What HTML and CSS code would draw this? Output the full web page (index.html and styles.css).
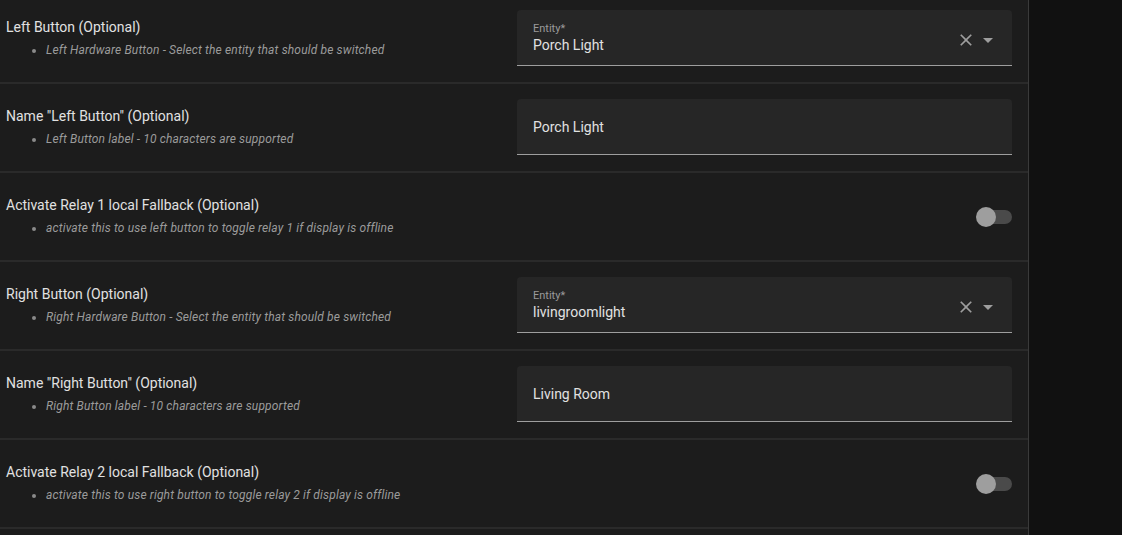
FILE: index.html
```html
<!DOCTYPE html>
<html>
<head>
<meta charset="utf-8">
<link rel="stylesheet" href="styles.css">
</head>
<body>
<div class="layout">
  <div class="panel">
    <div class="rows">
      <div class="row">
        <div class="info">
          <div class="title">Left Button (Optional)</div>
          <ul class="desc"><li>Left Hardware Button - Select the entity that should be switched</li></ul>
        </div>
        <div class="field">
          <div class="field-text">
            <div class="label">Entity*</div>
            <div class="value">Porch Light</div>
          </div>
          <div class="icons">
            <svg class="clear" width="24" height="24" viewBox="0 0 24 24"><path fill="#9e9e9e" d="M19,6.41L17.59,5L12,10.59L6.41,5L5,6.41L10.59,12L5,17.59L6.41,19L12,13.41L17.59,19L19,17.59L13.41,12L19,6.41Z"/></svg>
            <svg class="caret" width="24" height="24" viewBox="0 0 24 24"><path fill="#9e9e9e" d="M7,10L12,15L17,10H7Z"/></svg>
          </div>
        </div>
      </div>
      <div class="row">
        <div class="info">
          <div class="title">Name "Left Button" (Optional)</div>
          <ul class="desc"><li>Left Button label - 10 characters are supported</li></ul>
        </div>
        <div class="field plain">
          <div class="value">Porch Light</div>
        </div>
      </div>
      <div class="row">
        <div class="info">
          <div class="title">Activate Relay 1 local Fallback (Optional)</div>
          <ul class="desc"><li>activate this to use left button to toggle relay 1 if display is offline</li></ul>
        </div>
        <div class="switch"><div class="track"></div><div class="thumb"></div></div>
      </div>
      <div class="row">
        <div class="info">
          <div class="title">Right Button (Optional)</div>
          <ul class="desc"><li>Right Hardware Button - Select the entity that should be switched</li></ul>
        </div>
        <div class="field">
          <div class="field-text">
            <div class="label">Entity*</div>
            <div class="value">livingroomlight</div>
          </div>
          <div class="icons">
            <svg class="clear" width="24" height="24" viewBox="0 0 24 24"><path fill="#9e9e9e" d="M19,6.41L17.59,5L12,10.59L6.41,5L5,6.41L10.59,12L5,17.59L6.41,19L12,13.41L17.59,19L19,17.59L13.41,12L19,6.41Z"/></svg>
            <svg class="caret" width="24" height="24" viewBox="0 0 24 24"><path fill="#9e9e9e" d="M7,10L12,15L17,10H7Z"/></svg>
          </div>
        </div>
      </div>
      <div class="row">
        <div class="info">
          <div class="title">Name "Right Button" (Optional)</div>
          <ul class="desc"><li>Right Button label - 10 characters are supported</li></ul>
        </div>
        <div class="field plain">
          <div class="value">Living Room</div>
        </div>
      </div>
      <div class="row">
        <div class="info">
          <div class="title">Activate Relay 2 local Fallback (Optional)</div>
          <ul class="desc"><li>activate this to use right button to toggle relay 2 if display is offline</li></ul>
        </div>
        <div class="switch"><div class="track"></div><div class="thumb"></div></div>
      </div>
    </div>
  </div>
  <div class="side"></div>
</div>
</body>
</html>
```

FILE: styles.css
```css
html, body {
  margin: 0;
  padding: 0;
  height: 100%;
  overflow: hidden;
  background: #111111;
  font-family: Roboto, "Liberation Sans", sans-serif;
}
.layout {
  display: flex;
  height: 535px;
}
.panel {
  width: 1028px;
  background: #1c1c1c;
  border-right: 1px solid #3a3a3a;
  overflow: hidden;
}
.side {
  flex: 1;
  background: #111111;
}
.rows {
  margin-top: -5px;
}
.row {
  display: flex;
  align-items: center;
  justify-content: space-between;
  height: 87px;
  padding: 0 16px 0 6px;
  border-bottom: 2px solid #2a2a2a;
}
.info {
  align-self: flex-start;
  padding-top: 23px;
}
.title {
  font-size: 14px;
  line-height: 18px;
  color: #e1e1e1;
}
.desc {
  margin: 6px 0 0 0;
  padding-left: 40px;
  font-size: 12px;
  line-height: 16px;
  font-style: italic;
  letter-spacing: 0.15px;
  color: #9b9b9b;
}
.desc li::marker {
  font-style: normal;
  color: #8a8a8a;
}
.field {
  width: 495px;
  height: 55px;
  box-sizing: content-box;
  background: #262626;
  border-bottom: 1px solid #9e9e9e;
  border-radius: 4px 4px 0 0;
  display: flex;
  align-items: center;
  justify-content: space-between;
  padding: 0;
  margin-top: -1px;
}
.field-text {
  padding-left: 16px;
  padding-top: 2px;
}
.label {
  font-size: 11px;
  line-height: 12px;
  color: #9a9a9a;
}
.value {
  font-size: 14px;
  line-height: 20px;
  color: #e1e1e1;
}
.field.plain .value {
  padding-left: 16px;
  padding-top: 1px;
}
.icons {
  display: flex;
  align-items: center;
  padding-right: 12px;
  padding-top: 4px;
}
.clear {
  width: 20px;
  height: 20px;
  margin-right: 0;
}
.caret {
  width: 24px;
  height: 24px;
}
.switch {
  position: relative;
  width: 36px;
  height: 20px;
}
.track {
  position: absolute;
  left: 2px;
  right: 0;
  top: 3px;
  height: 14px;
  border-radius: 7px;
  background: #4a4a4a;
}
.thumb {
  position: absolute;
  left: 0;
  top: 0;
  width: 20px;
  height: 20px;
  border-radius: 50%;
  background: #9e9e9e;
}
```
